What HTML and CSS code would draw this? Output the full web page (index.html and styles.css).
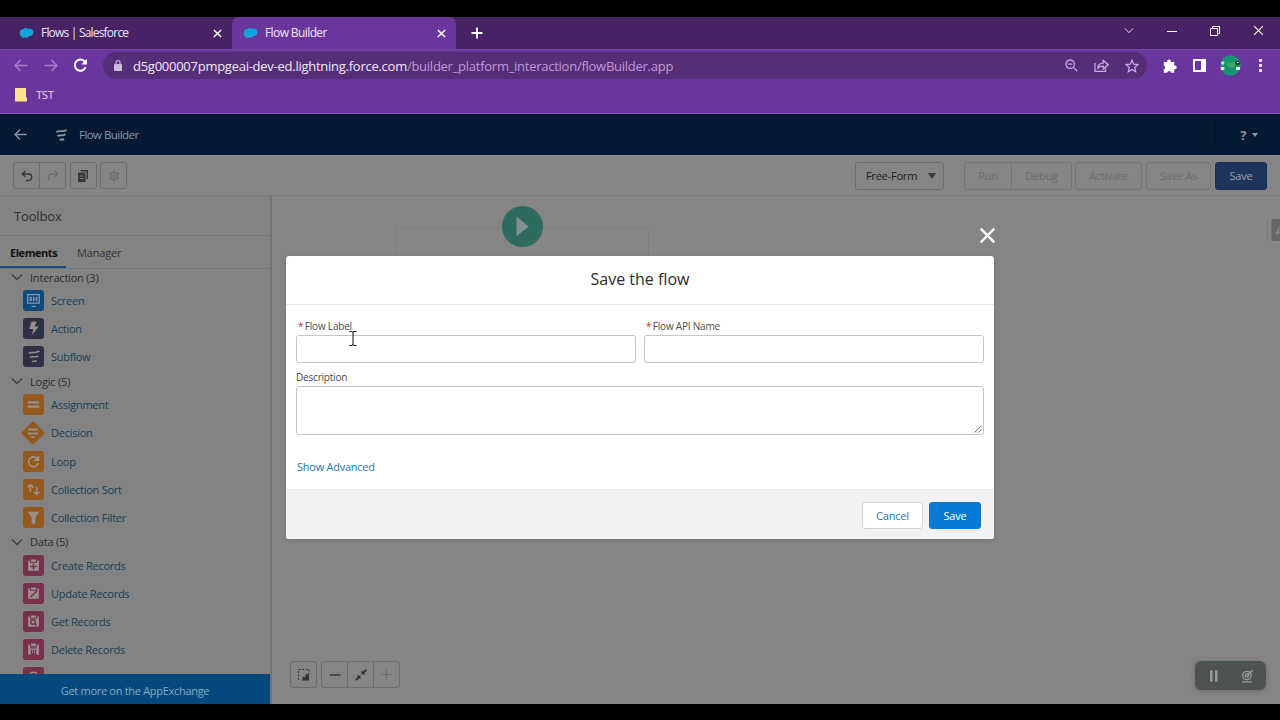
FILE: index.html
```html
<!DOCTYPE html>
<html lang="en">
<head>
<meta charset="utf-8">
<title>Flow Builder</title>
<link rel="stylesheet" href="styles.css">
</head>
<body>
<svg width="0" height="0" class="defs">
  <symbol id="cloud" viewBox="0 0 16 12"><path d="M1 6C.4 3.400 2.400 1.500 4.600 2 6 .2 8.300.3 9.400 1.800 12-.1 15.600 2 15.200 5.500 15 8.300 12.800 9.500 11 9 10 11 8 11.500 6.500 10.400 4.500 12 2.300 11 2 9 1 8.500.6 7.200 1 6z" fill="#12a5dc"/></symbol>
  <symbol id="x" viewBox="0 0 10 10"><path d="M1 1l8 8M9 1L1 9" class="ln"/></symbol>
  <symbol id="plus" viewBox="0 0 12 12"><path d="M6 .5v11M.5 6h11" class="ln"/></symbol>
  <symbol id="back" viewBox="0 0 14 12"><path d="M13.500 6H1M6.500.6L1 6l5.500 5.400" class="ln"/></symbol>
  <symbol id="chev" viewBox="0 0 12 8"><path d="M1 1.500l5 5 5-5" class="ln"/></symbol>
  <symbol id="flow" viewBox="0 0 14 14"><path d="M1.500 3.700c4-2.200 7 .6 11-2.200M2.700 8c3-1.700 5 .6 8.500-1.700M5 12.200c2-1 3 .3 4.800-.8" class="ln"/></symbol>
  <symbol id="clip" viewBox="0 0 14 14"><path d="M1 2h2v2.500h8V2h2v11.500H1z"/><path d="M4.200 1h5.600v2.400H4.200z"/></symbol>
</svg>
<div class="window">
  <div class="tabstrip">
    <div class="tab"><svg class="cloud"><use href="#cloud"/></svg><span class="t1">Flows | Salesforce</span><svg class="tabx"><use href="#x"/></svg></div>
    <div class="tab active"><svg class="cloud"><use href="#cloud"/></svg><span>Flow Builder</span><svg class="tabx"><use href="#x"/></svg></div>
    <svg class="newtab"><use href="#plus"/></svg>
    <div class="wincontrols">
      <svg width="10" height="7"><use href="#chev"/></svg>
      <svg width="10" height="10" viewBox="0 0 10 10"><path class="ln" d="M0 5.500h10"/></svg>
      <svg width="10" height="10" viewBox="0 0 10 10"><path class="ln" d="M.5 2.500h7v7h-7zM2.500 2.500v-2h7v7h-2"/></svg>
      <svg width="11" height="11"><use href="#x"/></svg>
    </div>
  </div>
  <div class="addressrow">
    <svg class="nav" width="14" height="13"><use href="#back"/></svg>
    <svg class="nav flip" width="14" height="13"><use href="#back"/></svg>
    <svg class="reload" width="15" height="15" viewBox="0 0 15 15"><path d="M12.600 9.200A5.600 5.600 0 1 1 11.800 3.700" class="ln"/><path d="M14 .8v5.700H8.300z" fill="#fff"/></svg>
    <div class="omnibox">
      <svg class="lock" width="8" height="11" viewBox="0 0 8 11"><rect y="4" width="8" height="7" rx="1" fill="#cbbcd8"/><path d="M2 4.500V2.700a2 2 0 0 1 4 0v1.800" class="ln"/></svg>
      <span class="url">d5g000007pmpgeai-dev-ed.lightning.force.com<i>/builder_platform_interaction/flowBuilder.app</i></span>
      <svg class="end" width="13" height="13" viewBox="0 0 13 13"><circle cx="5.200" cy="5.200" r="4.200" class="ln"/><path class="ln" d="M3 5.200h4.400M8.400 8.400L12.300 12.300"/></svg>
      <svg width="15" height="13" viewBox="0 0 15 13"><path class="ln" d="M1 4v8.400h10.500V9M3.800 9c.2-3 2-4.800 5.400-4.900V1.500l5 4.200-5 4.100V7.200C6.800 7.200 5 7.800 3.800 9z"/></svg>
      <svg width="14" height="14" viewBox="0 0 14 14"><path class="ln" d="M7 1.200l1.700 4 4.300.4-3.300 2.800 1 4.300L7 10.400l-3.700 2.300 1-4.300L1 5.600l4.300-.4z"/></svg>
    </div>
    <svg class="puzzle" width="14" height="14" viewBox="0 0 14 14"><path fill="#fff" d="M.8 3h3.400a1.900 1.900 0 1 1 3.600 0h3.400v3.600a1.900 1.900 0 1 1 0 3.600v3.600H8a1.900 1.900 0 0 0-3.800 0H.8v-3.600a1.900 1.900 0 0 0 0-3.600z"/></svg>
    <svg class="side" width="13" height="13" viewBox="0 0 13 13"><path fill="#fff" fill-rule="evenodd" d="M0 0h13v13H0zM2 2v9h6V2z"/></svg>
    <svg class="avatar" width="21" height="21" viewBox="0 0 21 21"><circle cx="10.500" cy="10.500" r="10.200" fill="#159475"/><path d="M6 6l3 2 3-1 4 2-3 4-5-1z" fill="#3fa453"/><circle cx="2.800" cy="8" r="1.700" fill="#c5e6cf"/><circle cx="17.500" cy="8" r="2.300" fill="#153f35"/><path d="M.8 12h3.500v3H.8zM16 12h4v3h-4z" fill="#f1e5cc"/><path d="M17 7h1.500v1H17z" fill="#fff"/></svg>
    <svg class="dots" width="3" height="13" viewBox="0 0 3 13"><path fill="#eadcf5" d="M0 0h3v3H0zM0 5h3v3H0zM0 10h3v3H0z"/></svg>
  </div>
  <div class="bookmarks"><svg width="12" height="14" viewBox="0 0 12 14"><path fill="#ffe391" d="M0 0h11v9l1 1v3.500H0z"/></svg><span>TST</span></div>

  <header class="apphead">
    <svg class="aback" width="13" height="11"><use href="#back"/></svg>
    <svg class="alogo" width="13" height="14"><use href="#flow"/></svg>
    <span>Flow Builder</span>
    <div class="help"><b>?</b><i class="tri"></i></div>
  </header>
  <div class="toolbar">
    <div class="group"><div class="sq"><svg width="12" height="12" viewBox="0 0 12 12"><path class="ln" d="M4.500 1L1.300 4l3.200 3M1.500 4h6a3.200 3.200 0 0 1 0 6.500H5"/></svg></div><div class="sq faint"><svg width="12" height="12" viewBox="0 0 12 12"><path class="ln" d="M7.500 1l3.200 3-3.200 3M10.500 4h-6a3.200 3.200 0 0 0-1.500 6"/></svg></div></div>
    <div class="group"><div class="sq"><svg width="10" height="12" viewBox="0 0 10 12"><path fill="#383838" d="M2.500 0H10v9H8.500V1.500h-6zM0 2.500h7.500V12H0z"/><path d="M2 6h3.500M2 8.500h3.500" stroke="#777"/></svg></div></div>
    <div class="group"><div class="sq faint"><svg width="12" height="12" viewBox="0 0 12 12"><circle cx="6" cy="6" r="3.500" class="ln"/><circle cx="6" cy="6" r="1" class="ln"/><path class="ln" d="M6 .5v2M6 9.500v2M1.200 3.200l1.800 1M9 7.800l1.800 1M1.200 8.800L3 7.800M9 4.200l1.800-1"/></svg></div></div>
    <div class="btn select">Free-Form<i class="tri"></i></div>
    <div class="pair"><div class="off run">Run</div><div class="off debug">Debug</div></div>
    <div class="btn off activate">Activate</div>
    <div class="btn off saveas">Save As</div>
    <div class="btn navy">Save</div>
  </div>
  <div class="main">
    <aside class="sidebar">
      <h2>Toolbox</h2>
      <div class="sidetabs"><b>Elements</b><span>Manager</span></div>
      <div class="list">
        <div class="cat"><svg><use href="#chev"/></svg>Interaction (3)</div>
        <div class="item"><svg class="ic blue" viewBox="0 0 20 20"><path class="ln" d="M4.500 4.500h11v8h-11zM8 15.700h4"/><path d="M6.300 6.500h2v4h-2zM9.500 6.500h1.500v4H9.500zM12.200 6.500h1.500v4h-1.500z"/></svg>Screen</div>
        <div class="item"><svg class="ic slate" viewBox="0 0 20 20"><path d="M8 3.500h5l-2 4.700h4l-6.500 8 1.300-5.800H6z"/></svg>Action</div>
        <div class="item"><svg class="ic slate" viewBox="0 0 20 20"><use href="#flow" x="4" y="3.500" width="13" height="13"/></svg>Subflow</div>
        <div class="cat"><svg><use href="#chev"/></svg>Logic (5)</div>
        <div class="item"><svg class="ic orange" viewBox="0 0 20 20"><path d="M4.500 7h11v2h-11zM4.500 11h11v2h-11z"/></svg>Assignment</div>
        <div class="item"><svg class="ic dec" viewBox="0 0 24 24"><path fill="#94591f" stroke="#94591f" stroke-width="3" stroke-linejoin="round" d="M12 2L22 12 12 22 2 12z"/><path d="M7 7.500h10v2H7zM7 11.500h10v2H7zM10 15.500h4V17h-4z"/></svg>Decision</div>
        <div class="item"><svg class="ic orange" viewBox="0 0 20 20"><path class="ln" d="M13.600 7.200a4.700 4.700 0 1 0 1 4.300"/><path d="M15.600 4v5.500H10z"/></svg>Loop</div>
        <div class="item"><svg class="ic orange" viewBox="0 0 20 20"><path class="ln" d="M7 12.500V5.500M4.300 8L7 5.300 9.700 8M13 7.500v7M10.300 12l2.700 2.700 2.700-2.700"/></svg>Collection Sort</div>
        <div class="item"><svg class="ic orange" viewBox="0 0 20 20"><path d="M4.500 4.500h11L11.800 10v6H8.200v-6z"/></svg>Collection Filter</div>
        <div class="cat"><svg><use href="#chev"/></svg>Data (5)</div>
        <div class="item"><svg class="ic pink" viewBox="0 0 20 20"><use href="#clip" x="4" y="3" width="12" height="13"/><path class="cut" d="M10 8v6M7 11h6"/></svg>Create Records</div>
        <div class="item"><svg class="ic pink" viewBox="0 0 20 20"><use href="#clip" x="4" y="3" width="12" height="13"/><path class="cut" d="M7 13.500L13.500 7.500"/></svg>Update Records</div>
        <div class="item"><svg class="ic pink" viewBox="0 0 20 20"><use href="#clip" x="4" y="3" width="12" height="13"/><circle class="cut" cx="9.500" cy="10.500" r="2.200"/><path class="cut" d="M11 12l2 2"/></svg>Get Records</div>
        <div class="item"><svg class="ic pink" viewBox="0 0 20 20"><use href="#clip" x="4" y="3" width="12" height="13"/><path class="cut" d="M7 8.500h6M8 10.500v4h4v-4M10 10v4"/></svg>Delete Records</div>
        <div class="item"><svg class="ic pink" viewBox="0 0 20 20"><circle class="ln" cx="10" cy="9" r="4"/></svg></div>
      </div>
      <div class="exchange">Get more on the AppExchange</div>
    </aside>
    <section class="canvas">
      <div class="startbox"></div>
      <svg class="start" width="41" height="41" viewBox="0 0 41 41"><circle cx="20.500" cy="20.500" r="20.500" fill="#2e6a5e"/><path d="M14.500 10.500L26.500 20.500l-12 10z" fill="#84918e"/></svg>
      <div class="flyout"><svg width="6" height="10" viewBox="0 0 6 10"><path d="M5.500 0L1 9h4.500" fill="#7e8181"/></svg></div>
      <div class="zoombar">
        <div class="sq"><svg width="12" height="12" viewBox="0 0 12 12"><path d="M.5 11V.5H11V5" fill="none" stroke="#333" stroke-dasharray="2 1.500"/><path d="M.5 11.500h3M4 11.500l1-4 2 1 1-4 1.500 1.500L11 4v7.500z" fill="#333"/></svg></div>
        <div class="group"><div class="sq"><svg width="12" height="12" viewBox="0 0 12 12"><path class="ln" d="M.5 6h11"/></svg></div><div class="sq"><svg width="12" height="12" viewBox="0 0 12 12"><path fill="#303030" d="M6.500 5.500V1.500l1.300 1.300L10.500.2l1.300 1.300-2.600 2.700 1.300 1.300zM5.500 6.500v4L4.200 9.200 1.500 11.800.2 10.500l2.700-2.700-1.400-1.300z"/></svg></div><div class="sq faint"><svg width="11" height="11"><use href="#plus"/></svg></div></div>
      </div>
      <div class="recorder"><svg width="8" height="12" viewBox="0 0 8 12"><path fill="#979b9b" d="M0 .5h2.500v11H0zM5 .5h2.500v11H5z"/></svg><svg width="13" height="14" viewBox="0 0 13 14"><circle cx="6" cy="6.500" r="4.200" class="ln"/><circle cx="6" cy="6.500" r="1.700" class="ln"/><path class="ln" d="M1 12.800h10M6 6.500L12 1"/></svg></div>
    </section>
  </div>
</div>

<div class="modal">
  <svg class="close"><use href="#x"/></svg>
  <div class="mhead">Save the flow</div>
  <div class="mbody">
    <div class="cols">
      <label><span class="lab req"><b>*</b>Flow Label</span><span class="input"></span></label>
      <label><span class="lab req"><b>*</b>Flow API Name</span><span class="input"></span></label>
    </div>
    <div class="lab desc">Description</div>
    <div class="area"><svg width="8" height="8" viewBox="0 0 8 8"><path d="M.5 7.500l7-7M4.500 7.500l3-3" stroke="#777" fill="none"/></svg></div>
    <div class="adv">Show Advanced</div>
  </div>
  <div class="mfoot"><div class="mbtn">Cancel</div><div class="mbtn primary">Save</div></div>
  <svg class="caret" width="8" height="15" viewBox="0 0 8 15"><path d="M.5.500h2.500l1 .8 1-.8h2.500M4 1v13M.5 14.500H3l1-.8 1 .8h2.500" stroke="#111" fill="none"/></svg>
</div>
</body>
</html>
```
FILE: styles.css
```css
* { box-sizing: border-box; }
body { margin: 0; width: 1280px; height: 720px; overflow: hidden; background: #000; padding-top: 17px; font-family: "Open Sans", "Noto Sans", sans-serif; font-size: 11px; letter-spacing: -0.2px; position: relative; }
.defs { position: absolute; }
svg { display: block; flex: none; }
i { font-style: normal; }
.ln { fill: none; stroke: var(--c, #fff); stroke-width: var(--w, 1); }
.window { height: 687px; display: flex; flex-direction: column; }

.tabstrip { height: 32px; display: flex; background: #472264; color: #efe5f6; font-size: 12px; letter-spacing: -0.6px; }
.tab { width: 232px; display: flex; align-items: center; padding: 0 10px 0 19px; }
.tab span { padding-bottom: 2px; }
.tab .t1 { letter-spacing: -0.8px; }
.tab.active { width: 224px; padding: 0 10px 0 11px; background: #6a359c; border-radius: 7px 7px 0 0; }
.cloud { width: 15px; height: 12px; margin-right: 7px; }
.tabx { width: 9px; height: 9px; margin-left: auto; --w: 1.6; }
.newtab { width: 12px; height: 12px; margin: 10px 0 0 15px; --w: 1.8; }
.wincontrols { margin-left: auto; display: flex; align-items: center; gap: 33px; padding: 0 16px 5px 0; }
.addressrow { height: 34px; background: #6a359c; display: flex; align-items: center; border-top: 1px solid #7545a4; padding: 0 0 2px 14px; }
.nav { --c: #a77fca; --w: 1.5; margin-right: 16px; }
.flip { transform: scaleX(-1); }
.reload { --w: 2; margin-left: -1px; }
.omnibox { width: 1044px; height: 27px; border-radius: 14px; background: #542e77; margin-left: 15px; display: flex; align-items: center; gap: 16px; padding: 0 8px 0 11px; --c: #c8a8e0; --w: 1.3; }
.url { font-size: 13px; color: #f2eaf8; letter-spacing: -0.26px; margin-left: -5px; white-space: nowrap; }
.url i { color: #c09ad8; }
.end { margin-left: auto; }
.puzzle { margin-left: 16px; }
.side { margin-left: 16px; }
.avatar { margin-left: 14px; }
.dots { margin-left: 18px; }
.bookmarks { height: 31px; background: #6a359c; border-bottom: 1px solid #8058a5; display: flex; align-items: center; gap: 9px; padding: 0 0 7px 15px; color: #e7dbef; font-size: 11.5px; letter-spacing: -0.5px; }

.apphead { height: 41px; background: #051a32; display: flex; align-items: center; padding: 0 22px 0 14px; color: #8b97a6; font-size: 11.5px; letter-spacing: -0.55px; --c: #8b97a6; --w: 1.4; }
.alogo { margin: 0 11px 0 28px; --w: 2; }
.help { margin-left: auto; display: flex; align-items: center; gap: 6px; font-size: 13px; height: 28px; padding-left: 24px; border-left: 1px solid #03142a; }
.tri { border: 3px solid transparent; border-top: 4px solid; border-bottom: 0; }
.toolbar { height: 41px; flex: none; background: #858585; border-top: 1px solid #919191; border-bottom: 1px solid #7b7b7b; display: flex; align-items: center; padding: 0 13px; }
.group { display: flex; margin-right: 3.500px; }
.sq { width: 27px; height: 27px; border: 1px solid #6d6d6d; border-radius: 3px; display: flex; align-items: center; justify-content: center; --c: #383838; --w: 1.5; }
.sq + .sq { margin-left: -1px; border-radius: 0 3px 3px 0; }
.faint { --c: #6c6c6c; --w: 1.1; }
.btn { height: 28px; border: 1px solid #6d6d6d; border-radius: 3px; display: flex; align-items: center; justify-content: center; }
.select { width: 89px; margin-left: auto; gap: 11px; color: #1d1d1d; padding-left: 3px; }
.select .tri { border-width: 6px 4.500px 0; border-top-color: #3b3b3b; }
.off { color: #6d6d6d; display: flex; align-items: center; justify-content: center; border-color: #747474; }
.pair { display: flex; margin: 0 3px 0 20px; height: 28px; border: 1px solid #747474; border-radius: 3px; }
.run { width: 46px; }
.debug { width: 60px; border-left: 1px solid #747474; }
.activate { width: 67px; margin-right: 4px; }
.saveas { width: 65px; margin-right: 4px; }
.navy { width: 52px; background: #1d355c; border-color: #182f53; color: #9ca6b5; }
.main { flex: 1; display: flex; min-height: 0; }
.sidebar { width: 272px; background: #838383; border-right: 2px solid #747474; display: flex; flex-direction: column; }
.sidebar h2 { margin: 0; height: 40px; border-bottom: 1px solid #777; font-weight: 400; font-size: 13px; line-height: 41px; padding-left: 14px; color: #303030; letter-spacing: -0.15px; }
.sidetabs { height: 33px; flex: none; border-bottom: 1px solid #777; display: flex; gap: 11px; color: #333; }
.sidetabs b { width: 66px; border-bottom: 2px solid #174e7d; padding-left: 10px; color: #111; line-height: 33px; height: 32px; letter-spacing: -0.45px; }
.sidetabs span { line-height: 33px; letter-spacing: -0.15px; }
.list { flex: 1; overflow: hidden; min-height: 0; }
.cat { height: 20px; display: flex; align-items: center; gap: 7px; padding-left: 11px; color: #2d2d2d; --c: #404040; --w: 1.4; }
.cat:first-child { margin-top: -2px; }
.cat svg { width: 12px; height: 8px; }
.item { height: 28.12px; display: flex; align-items: center; gap: 7px; padding: 0 0 1px 23px; color: #173f58; letter-spacing: -0.25px; }
.ic { width: 21px; height: 21px; border-radius: 3px; fill: #99908b; --c: #99908b; --w: 1.5; }
.blue { background: #10497b; fill: #7f98ad; --c: #7f98ad; --w: 1.2; }
.slate { background: #2e3146; }
.orange { background: #94591f; }
.dec { width: 24px; height: 24px; margin: 0 -1px 0 -2px; }
.pink { background: #77304d; }
.cut { fill: none; stroke: #77304d; stroke-width: 1.3; }
.exchange { height: 30px; flex: none; background: #054a7e; color: #8aa8bf; display: flex; align-items: center; justify-content: center; padding-top: 3px; letter-spacing: -0.3px; }
.canvas { flex: 1; background: #858585; position: relative; }
.startbox { position: absolute; left: 123px; top: 31px; width: 254px; height: 50px; border: 1px solid #7d7d7d; border-radius: 3px; }
.start { position: absolute; left: 230px; top: 10px; }
.flyout { position: absolute; right: 0; top: 23px; width: 9px; height: 22px; background: #646766; border-radius: 2px 0 0 2px; border-left: 1px solid #747876; box-shadow: -3px 0 0 #858585, -4px 0 0 #787d78; display: flex; align-items: center; justify-content: flex-end; }
.zoombar { position: absolute; left: 18px; top: 465px; display: flex; gap: 4px; }
.recorder { position: absolute; left: 923px; top: 465px; width: 71px; height: 29px; border-radius: 6px; background: #4d5252; box-shadow: 0 1px 4px #5559; display: flex; align-items: center; justify-content: center; gap: 23px; padding-left: 3px; --c: #979b9b; --w: 1.3; }

.modal { position: absolute; left: 286px; top: 256px; width: 708px; height: 283px; background: #fff; border-radius: 3px; box-shadow: 0 1px 3px #5557; }
.close { position: absolute; right: -2px; top: -29px; width: 17px; height: 17px; --w: 1.4; }
.mhead { height: 49px; border-bottom: 1px solid #e7e7e7; text-align: center; font-size: 16px; line-height: 47px; color: #2b2b2b; letter-spacing: 0; }
.mbody { height: 184px; padding: 13px 10px 0; }
.cols { display: flex; gap: 8px; }
.cols label { flex: 1; }
.lab { display: block; height: 17px; line-height: 16px; color: #4b4b4b; font-size: 10px; }
.req { padding-left: 2px; }
.lab b { color: #b2383b; font-weight: 400; margin-right: 1.500px; }
.input { display: block; height: 28px; border: 1px solid #c5c5c5; border-radius: 3px; }
.desc { margin-top: 6px; height: 17px; line-height: 17px; }
.area { height: 49px; border: 1px solid #c5c5c5; border-radius: 3px; display: flex; align-items: flex-end; justify-content: flex-end; padding: 1px; }
.adv { margin-top: 23px; line-height: 18px; padding-left: 1px; color: #2676a4; letter-spacing: -0.25px; }
.mfoot { height: 50px; background: #f2f2f2; border-top: 1px solid #e9e9e9; border-radius: 0 0 3px 3px; display: flex; align-items: center; justify-content: flex-end; gap: 6px; padding: 1px 13px 0 0; }
.mbtn { width: 61px; height: 27px; border: 1px solid #d4d4d4; border-radius: 3px; background: #fff; color: #2676a4; display: flex; align-items: center; justify-content: center; }
.primary { width: 52px; background: #0979d2; border-color: #0979d2; color: #fff; }
.caret { position: absolute; left: 63px; top: 75px; }
```
